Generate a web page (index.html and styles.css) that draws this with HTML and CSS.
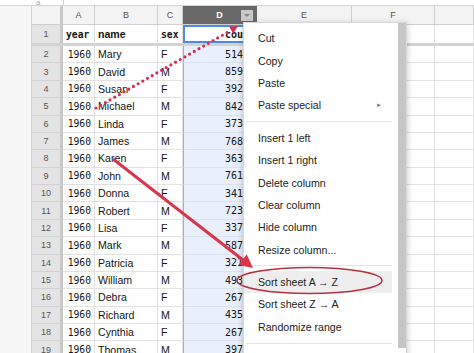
FILE: index.html
```html
<!DOCTYPE html>
<html lang="en">
<head>
  <meta charset="UTF-8" />
  <title>Sort sheet</title>
  <link rel="stylesheet" href="styles.css">
</head>
<body>

<div class="page">
  <div class="formula-bar">
    <div class="fb-name"><span class="fb-glyph">a</span></div>
  </div>

  <div class="workspace">
    <div class="gutter"></div>

    <div class="sheet" id="sheet">
      <div class="row head-row">
        <div class="cell ch corner"></div>
        <div class="cell ch">A</div>
        <div class="cell ch">B</div>
        <div class="cell ch">C</div>
        <div class="cell ch ch-active">
          <span></span>
          <span class="ch-letter">D</span>
          <span class="ch-drop"><span class="ch-caret"></span></span>
        </div>
        <div class="cell ch">E</div>
        <div class="cell ch">F</div>
        <div class="cell ch"></div>
      </div>

      <div class="row frozen-row">
        <div class="cell rh">1</div>
        <div class="cell bold mono">year</div>
        <div class="cell bold">name</div>
        <div class="cell bold mono">sex</div>
        <div class="cell bold mono num sel current">count</div>
        <div class="cell"></div>
        <div class="cell"></div>
        <div class="cell"></div>
      </div>
      <!-- data rows are filled in below -->
    </div>
  </div>

  <!-- column context menu -->
  <div class="menu">
    <div class="menu-list">
      <div class="menu-item">Cut</div>
      <div class="menu-item">Copy</div>
      <div class="menu-item">Paste</div>
      <div class="menu-item">Paste special <span class="sub-arrow">&#9658;</span></div>
      <div class="menu-sep"></div>
      <div class="menu-item">Insert 1 left</div>
      <div class="menu-item">Insert 1 right</div>
      <div class="menu-item">Delete column</div>
      <div class="menu-item">Clear column</div>
      <div class="menu-item">Hide column</div>
      <div class="menu-item">Resize column...</div>
      <div class="menu-sep"></div>
      <div class="menu-item hover">Sort sheet A &rarr; Z</div>
      <div class="menu-item">Sort sheet Z &rarr; A</div>
      <div class="menu-item">Randomize range</div>
      <div class="menu-sep"></div>
    </div>
    <div class="menu-scroll"></div>
  </div>

  <!-- red annotations drawn on top of the screenshot -->
  <svg class="marks" width="474" height="353" viewBox="0 0 474 353">
    <line x1="96" y1="108" x2="228" y2="32" stroke="#d42f57" stroke-width="3.2" stroke-linecap="round" stroke-dasharray="0 5.4"/>
    <polygon points="238,26 233.1,33.5 229.1,26.5" fill="#d42f57"/>
    <line x1="113" y1="159" x2="243" y2="260" stroke="#d9364b" stroke-width="3"/>
    <polygon points="253,268 238.5,265 246.7,254.3" fill="#d9364b"/>
    <ellipse cx="309.5" cy="280.5" rx="72.5" ry="13" fill="none" stroke="#b5323f" stroke-width="1.6"/>
  </svg>
</div>

<script>
  const people = [
    ['Mary', 'F', 51474], ['David', 'M', 85929], ['Susan', 'F', 39200],
    ['Michael', 'M', 84202], ['Linda', 'F', 37314], ['James', 'M', 76842],
    ['Karen', 'F', 36376], ['John', 'M', 76105], ['Donna', 'F', 34133],
    ['Robert', 'M', 72369], ['Lisa', 'F', 33705], ['Mark', 'M', 58729],
    ['Patricia', 'F', 32102], ['William', 'M', 49355], ['Debra', 'F', 26735],
    ['Richard', 'M', 43555], ['Cynthia', 'F', 26725], ['Thomas', 'M', 39725]
  ];

  const sheet = document.getElementById('sheet');

  people.forEach((p, i) => {
    const row = document.createElement('div');
    row.classList.add('row');
    row.innerHTML = `
      <div class="cell rh">${i + 2}</div>
      <div class="cell mono num">1960</div>
      <div class="cell">${p[0]}</div>
      <div class="cell">${p[1]}</div>
      <div class="cell mono num sel">${p[2]}</div>
      <div class="cell"></div>
      <div class="cell"></div>
      <div class="cell"></div>
    `;
    sheet.appendChild(row);
  });
</script>

</body>
</html>
```

FILE: styles.css
```css
body {
  margin: 0;
  font-family: "Liberation Sans", Arial, sans-serif;
  background-color: #ffffff;
  overflow: hidden;
}

.page {
  position: relative;
  width: 474px;
  height: 353px;
  overflow: hidden;
}

/* top strip (bottom of the formula bar) */
.formula-bar {
  height: 6px;
  border-bottom: 1px solid #d6d6d6;
  box-sizing: border-box;
  display: flex;
  padding-left: 32px;
}

.fb-name {
  width: 31px;
  border-right: 1px solid #d6d6d6;
  overflow: hidden;
  display: flex;
  align-items: flex-end;
}

.fb-glyph {
  font-size: 8px;
  line-height: 4px;
  color: #aaa;
  padding-left: 4px;
}

.workspace {
  display: flex;
}

.gutter {
  width: 32px;
  background-color: #f6f6f6;
  border-right: 1px solid #d4d4d4;
  box-sizing: border-box;
}

.sheet {
  flex: 1;
}

.row {
  display: grid;
  grid-template-columns: 31px 32px 63px 25px 74px 95px 83px 1fr;
  height: 17.375px;
}

.head-row {
  height: 19px;
}

.frozen-row {
  height: 21px;
  border-bottom: 3px solid #d3d3d3;
  box-sizing: border-box;
}

.cell {
  display: flex;
  align-items: center;
  padding: 0 3px;
  border-right: 1px solid #e2e2e2;
  border-bottom: 1px solid #e2e2e2;
  box-sizing: border-box;
  overflow: hidden;
  white-space: nowrap;
  font-size: 10.6px;
  color: #151515;
}

.frozen-row .cell {
  border-bottom: none;
}

.mono {
  font-family: "DejaVu Sans Mono", monospace;
  font-size: 9.7px;
}

.bold {
  font-weight: bold;
}

.num {
  justify-content: flex-end;
}

/* column headers */
.ch {
  justify-content: center;
  background-color: #f3f3f3;
  border-right: 1px solid #cfcfcf;
  border-bottom: 1px solid #cfcfcf;
  color: #555;
  font-size: 9px;
}

.corner {
  border-right: 3px solid #c8c8c8;
}

.ch-active {
  display: grid;
  grid-template-columns: 1fr auto 1fr;
  align-items: center;
  background-color: #686868;
  border-right-color: #686868;
  color: #fff;
  font-weight: bold;
  padding-right: 3px;
}

.ch-letter {
  text-align: center;
}

.ch-drop {
  justify-self: end;
  width: 12px;
  height: 11px;
  background-color: #c9c9c9;
  display: flex;
  align-items: center;
  justify-content: center;
}

.ch-caret {
  width: 0;
  height: 0;
  border-left: 3px solid transparent;
  border-right: 3px solid transparent;
  border-top: 3px solid #888;
}

/* row headers */
.rh {
  justify-content: center;
  background-color: #e4e4e4;
  border-right: 3px solid #c8c8c8;
  border-bottom: 1px solid #d2d2d2;
  color: #555;
  font-size: 9px;
}

/* selected column D */
.sel {
  background-color: #e9f0fc;
  border-left: 1px solid #8fb2ec;
  border-bottom-color: #dbe3f0;
  font-size: 10px;
  padding-right: 1px;
}

.current {
  background-color: #ffffff;
  box-shadow: inset 0 0 0 2px #4d8be6;
  border-left: none;
}

/* context menu */
.menu {
  position: absolute;
  left: 243px;
  top: 22px;
  width: 164px;
  height: 340px;
  display: flex;
  background-color: #ffffff;
  border: 1px solid rgba(0,0,0,0.15);
  box-shadow: 0 2px 6px rgba(0,0,0,0.25);
  box-sizing: border-box;
}

.menu-list {
  width: 148px;
  padding-top: 4px;
}

.menu-item {
  height: 22.4px;
  display: flex;
  align-items: center;
  justify-content: space-between;
  padding: 0 10px 0 14px;
  font-size: 10.6px;
  color: #222;
}

.menu-item.hover {
  background-color: #eeeeee;
}

.sub-arrow {
  font-size: 6px;
  color: #777;
}

.menu-sep {
  height: 10px;
  display: flex;
  align-items: center;
  padding-left: 2px;
}

.menu-sep::after {
  content: "";
  flex: 1;
  border-top: 1px solid #e6e6e6;
}

.menu-scroll {
  margin-left: 6px;
  width: 8px;
  height: 325px;
  background-color: #c6c6c6;
}

/* annotation layer */
.marks {
  position: absolute;
  left: 0;
  top: 0;
  pointer-events: none;
}
```
